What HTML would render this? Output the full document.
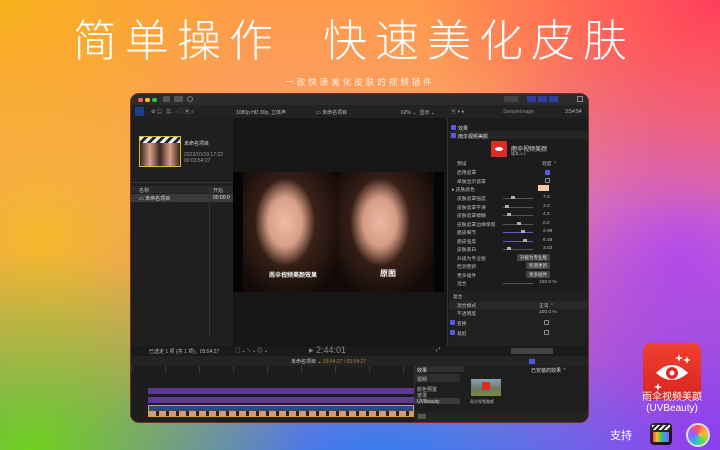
<!DOCTYPE html>
<html><head><meta charset="utf-8"><style>
*{margin:0;padding:0;box-sizing:border-box}
body{width:720px;height:450px;overflow:hidden;position:relative;font-family:"Liberation Sans","Noto Sans CJK SC",sans-serif;
background:
radial-gradient(ellipse 260px 200px at 0px 0px,#f8b21c 0%,rgba(248,178,28,0) 100%),
radial-gradient(ellipse 300px 220px at 720px 0px,#ff3d5e 0%,rgba(255,61,94,0) 100%),
radial-gradient(ellipse 280px 200px at 30px 450px,#6fd21c 0%,rgba(111,210,28,0) 100%),
radial-gradient(ellipse 300px 160px at 380px 470px,#2f7ef0 0%,rgba(47,126,240,0) 100%),
radial-gradient(ellipse 280px 260px at 720px 450px,#8b3ff0 0%,rgba(139,63,240,0) 100%),
radial-gradient(ellipse 260px 240px at 680px 260px,#c04de8 0%,rgba(192,77,232,0) 100%),
radial-gradient(ellipse 240px 200px at 40px 240px,#f6b82a 0%,rgba(246,184,42,0) 100%),
linear-gradient(180deg,#ff9a4a 0%,#f7a070 40%,#c780a0 80%,#8f6ad8 100%);}
.a{position:absolute}
.t{color:#fff;font-size:44px;letter-spacing:8px;top:17px;white-space:nowrap;font-weight:300;line-height:50px}
.sub{top:76px;left:0;width:720px;text-align:center;color:rgba(255,255,255,.85);font-size:8.5px;letter-spacing:3px}
.win{left:130px;top:93px;width:459px;height:330px;background:#1b1b1b;border-radius:9px;border:1.5px solid #7a2a28;overflow:hidden}
.s{font-size:5px;color:#bbb;white-space:nowrap}
.w{color:#ddd}
.row{position:absolute;left:10px;font-size:4.8px;color:#bbb;white-space:nowrap}
.sl{position:absolute;height:1px;background:#555}
.knob{position:absolute;width:4px;height:3px;background:#aab}
.btn{position:absolute;background:#444;border-radius:1px;font-size:4.5px;color:#ddd;text-align:center;line-height:7px;height:7px;white-space:nowrap}
.cb{position:absolute;width:5px;height:5px;border:1px solid #8a8aa0;border-radius:1px}
.cbb{position:absolute;width:5px;height:5px;background:#5a5ae0;border-radius:1px}
.clip{position:absolute;height:6px;background:#5b3a8f}
</style></head><body>
<div class="a t" style="left:73px">简单操作</div>
<div class="a t" style="left:323px">快速美化皮肤</div>
<div class="a sub">一款快速美化皮肤的视频插件</div>

<div class="a win">
 <div class="a" style="left:0;top:0;width:459px;height:11px;background:#2c2c2c"></div>
 <div class="a" style="left:7px;top:3.5px;width:4.5px;height:4.5px;border-radius:50%;background:#ff5f57"></div>
 <div class="a" style="left:14px;top:3.5px;width:4.5px;height:4.5px;border-radius:50%;background:#febc2e"></div>
 <div class="a" style="left:21px;top:3.5px;width:4.5px;height:4.5px;border-radius:50%;background:#28c840"></div>
 <div class="a" style="left:32px;top:2px;width:7px;height:6px;background:#555;border-radius:1px"></div>
 <div class="a" style="left:43px;top:2px;width:9px;height:6px;background:#555;border-radius:1px"></div>
 <div class="a" style="left:56px;top:2px;width:6px;height:6px;border:1px solid #777;border-radius:50%"></div>
 <div class="a" style="left:373px;top:2px;width:14px;height:6px;background:#444;border-radius:1px"></div>
 <div class="a" style="left:396px;top:2px;width:9px;height:6px;background:#2c3ea0"></div>
 <div class="a" style="left:407px;top:2px;width:9px;height:6px;background:#2c3ea0"></div>
 <div class="a" style="left:418px;top:2px;width:9px;height:6px;background:#2c3ea0"></div>
 <div class="a" style="left:446px;top:2px;width:6px;height:6px;border:1px solid #888"></div>
 <div class="a" style="left:0;top:11px;width:459px;height:13px;background:#222"></div>
 <div class="a" style="left:4px;top:13px;width:9px;height:9px;background:#1d3f8a"></div>
 <div class="a s" style="left:20px;top:14px;color:#aaa">⚙ ▤ &nbsp; ▦.. ⁝ ▢ ▣ ⌕</div>
 <div class="a s" style="left:105px;top:15px">1080p HD 30p, 立体声</div>
 <div class="a s" style="left:185px;top:15px">▭ 未命名项目</div>
 <div class="a s" style="left:270px;top:15px">62% ⌄ &nbsp;显示 ⌄</div>
 <div class="a s" style="left:320px;top:14px;color:#99a">▣ ▾ ●</div>
 <div class="a s" style="left:372px;top:15px;color:#888">SampleImage</div>
 <div class="a s" style="left:434px;top:15px">3:54:54</div>
 <div class="a" style="left:0;top:24px;width:102px;height:228px;background:#1f1f1f"></div>
 <div class="a" style="left:8px;top:42px;width:42px;height:31px;border:1px solid #d9b73a;background:linear-gradient(90deg,#3a2418 0%,#d8a088 25%,#3a2418 50%,#d8a088 75%,#3a2418 100%)"></div>
 <div class="a" style="left:9px;top:43px;width:40px;height:6px;background:repeating-linear-gradient(135deg,#eee 0 3px,#222 3px 6px)"></div>
 <div class="a s w" style="left:53px;top:46px">未命名项目</div>
 <div class="a s" style="left:53px;top:58px;color:#999">2022/10/19 17:22</div>
 <div class="a s" style="left:53px;top:64px;color:#999">00:03:54:27</div>
 <div class="a" style="left:0;top:88px;width:102px;height:1px;background:#333"></div>
 <div class="a" style="left:0;top:92px;width:102px;height:7px;background:#2a2a2a"></div>
 <div class="a s" style="left:8px;top:93px">名称</div><div class="a s" style="left:82px;top:93px">开始</div>
 <div class="a" style="left:0;top:100px;width:102px;height:8px;background:#3a3a3a"></div>
 <div class="a s w" style="left:8px;top:101px">▭ 未命名项目</div><div class="a s w" style="left:82px;top:101px">00:00:0</div>
 <div class="a" style="left:78px;top:92px;width:1px;height:150px;background:#333"></div>
 <div class="a" style="left:102px;top:24px;width:214px;height:228px;background:#161616"></div>
 <div class="a" style="left:102px;top:78px;width:211px;height:120px;background:#050505"></div>
 <div class="a" style="left:112px;top:78px;width:95px;height:120px;background:radial-gradient(ellipse 30px 44px at 42px 50px,#ecbba4 0%,#d9a088 55%,rgba(90,50,35,0) 100%),radial-gradient(ellipse 60px 80px at 45px 50px,#5a3425 0%,#2a1812 70%,#120a08 100%)"></div>
 <div class="a" style="left:207px;top:78px;width:96px;height:120px;background:radial-gradient(ellipse 30px 44px at 42px 50px,#eab8a3 0%,#d69c85 55%,rgba(90,50,35,0) 100%),radial-gradient(ellipse 60px 80px at 45px 50px,#5a3425 0%,#2a1812 70%,#120a08 100%)"></div>
 <div class="a" style="left:138px;top:176px;font-size:6px;color:#fff;font-weight:bold;white-space:nowrap">雨伞视频美颜效果</div>
 <div class="a" style="left:249px;top:174px;font-size:8px;color:#fff;font-weight:bold">原图</div>
 <div class="a" style="left:316px;top:24px;width:143px;height:228px;background:#1c1c1c;border-left:1px solid #333"></div>
 <div class="cbb" style="left:320px;top:31px"></div><div class="a s w" style="left:327px;top:31px">效果</div>
 <div class="a" style="left:318px;top:37px;width:138px;height:8px;background:#262626"></div>
 <div class="cbb" style="left:320px;top:39px"></div><div class="a s w" style="left:327px;top:39px">雨伞视频美颜</div>
 <div class="a" style="left:360px;top:47px;width:16px;height:16px;background:#e02a26;border-radius:1px"></div>
 <div class="a" style="left:364px;top:53px;width:8px;height:4px;background:#fff;border-radius:50%"></div>
 <div class="a s w" style="left:380px;top:50px;font-size:6px">雨伞视频美颜</div>
 <div class="a s" style="left:380px;top:57px;font-size:4px">版本:1.0</div>
 <div style="position:absolute;left:316px;top:0;width:143px;height:260px">
  <div class="row" style="top:66px">预设</div><div class="row" style="top:66px;left:95px">轻度 ⌃</div>
  <div class="row" style="top:75px">启用遮罩</div><div class="cbb" style="left:98px;top:76px"></div>
  <div class="row" style="top:84px">单独显示遮罩</div><div class="cb" style="left:98px;top:84px"></div>
  <div class="row" style="top:92px;left:5px">▸ 皮肤颜色</div><div class="a" style="left:91px;top:91px;width:11px;height:6px;background:#f3c9a8"></div>
  <div class="row" style="top:101px">皮肤遮罩强度</div>
  <div class="row" style="top:110px">皮肤遮罩平滑</div>
  <div class="row" style="top:118px">皮肤遮罩模糊</div>
  <div class="row" style="top:127px">皮肤遮罩边缘保留</div>
  <div class="row" style="top:135px">磨皮细节</div>
  <div class="row" style="top:144px">磨皮强度</div>
  <div class="row" style="top:152px">皮肤美白</div>
  <div class="row" style="top:161px">升级为专业版</div>
  <div class="row" style="top:169px">检测更新</div>
  <div class="row" style="top:178px">更多插件</div>
  <div class="row" style="top:186px">混合</div>
  <div class="sl" style="left:56px;top:104px;width:30px"></div><div class="knob" style="left:64px;top:102px"></div><div class="row" style="top:101px;left:96px">7.0</div>
  <div class="sl" style="left:56px;top:113px;width:30px"></div><div class="knob" style="left:58px;top:111px"></div><div class="row" style="top:110px;left:96px">3.0</div>
  <div class="sl" style="left:56px;top:121px;width:30px"></div><div class="knob" style="left:60px;top:119px"></div><div class="row" style="top:118px;left:96px">4.0</div>
  <div class="sl" style="left:56px;top:130px;width:30px"></div><div class="knob" style="left:70px;top:128px"></div><div class="row" style="top:127px;left:96px">0.2</div>
  <div class="sl" style="left:56px;top:138px;width:30px;background:#5a5ae0"></div><div class="knob" style="left:74px;top:136px"></div><div class="row" style="top:135px;left:96px">2.99</div>
  <div class="sl" style="left:56px;top:147px;width:30px;background:#5a5ae0"></div><div class="knob" style="left:76px;top:145px"></div><div class="row" style="top:144px;left:96px">6.48</div>
  <div class="sl" style="left:56px;top:155px;width:30px"></div><div class="knob" style="left:60px;top:153px"></div><div class="row" style="top:152px;left:96px">3.02</div>
  <div class="btn" style="left:70px;top:160px;width:33px">升级为专业版</div>
  <div class="btn" style="left:79px;top:168px;width:24px">检测更新</div>
  <div class="btn" style="left:79px;top:177px;width:24px">更多插件</div>
  <div class="sl" style="left:56px;top:189px;width:30px"></div><div class="row" style="top:186px;left:92px">100.0 %</div>
  <div class="a" style="left:2px;top:196px;width:138px;height:56px;background:#202020"></div>
  <div class="row" style="top:199px;left:6px">复合</div>
  <div class="a" style="left:2px;top:207px;width:138px;height:8px;background:#282828"></div>
  <div class="row" style="top:208px">混合模式</div><div class="row" style="top:208px;left:92px">正常 ⌃</div>
  <div class="row" style="top:216px">不透明度</div><div class="row" style="top:216px;left:92px">100.0 %</div>
  <div class="cbb" style="left:3px;top:226px"></div><div class="row" style="top:226px">变换</div><div class="cb" style="left:97px;top:226px"></div>
  <div class="cbb" style="left:3px;top:236px"></div><div class="row" style="top:236px">裁剪</div><div class="cb" style="left:97px;top:236px"></div>
 </div>
 <div class="a" style="left:0;top:252px;width:459px;height:10px;background:#1a1a1a"></div>
 <div class="a s" style="left:18px;top:254px">已选定 1 项 (共 1 项)，03:54:27</div>
 <div class="a s" style="left:104px;top:253px">▢ ⌄ ⟍ ⌄ ◎ ⌄</div>
 <div class="a" style="left:178px;top:251px;font-size:9px;color:#888;white-space:nowrap">▸ 2:44:01</div>
 <div class="a s" style="left:305px;top:253px">⤢</div>
 <div class="a" style="left:380px;top:254px;width:42px;height:6px;background:#444;border-radius:1px"></div>
 <div class="a" style="left:0;top:262px;width:459px;height:10px;background:#242424"></div>
 <div class="a s" style="left:160px;top:264px;color:#ccc">未命名项目 ⌄ <span style="color:#a08a3a">03:54:27 / 03:54:27</span></div>
 <div class="a" style="left:398px;top:265px;width:6px;height:5px;background:#4a5ad8"></div>
 <div class="a" style="left:0;top:272px;width:283px;height:58px;background:#1d1d1d"></div>
 <div class="a" style="left:0;top:272px;width:283px;height:6px;background:repeating-linear-gradient(90deg,#444 0 1px,transparent 1px 34px);opacity:.8"></div>
 <div class="clip" style="left:17px;top:294px;width:266px"></div>
 <div class="clip" style="left:17px;top:303px;width:266px"></div>
 <div class="a" style="left:17px;top:311px;width:266px;height:12px;background:#2a4a78;border:1px solid #c9a83a"></div>
 <div class="a" style="left:18px;top:317px;width:264px;height:5px;background:repeating-linear-gradient(90deg,#d49a7e 0 7px,#2a1e1a 7px 10px)"></div>
 <div class="a" style="left:283px;top:272px;width:176px;height:58px;background:#1e1e1e;border-left:1px solid #333"></div>
 <div class="a" style="left:283px;top:272px;width:50px;height:6px;background:#2e2e2e"></div>
 <div class="a s w" style="left:286px;top:273px">效果</div>
 <div class="a" style="left:284px;top:280px;width:45px;height:8px;background:#2e2e2e"></div>
 <div class="a s" style="left:286px;top:282px">视频</div>
 <div class="a s" style="left:286px;top:292px">颜色预置</div>
 <div class="a s" style="left:286px;top:298px">遮罩</div>
 <div class="a" style="left:284px;top:304px;width:45px;height:6px;background:#3a3a3a"></div>
 <div class="a s w" style="left:286px;top:305px">UVBeauty</div>
 <div class="a s w" style="left:400px;top:273px">已安装的效果 ⌃</div>
 <div class="a" style="left:340px;top:285px;width:30px;height:17px;background:linear-gradient(180deg,#8aa2b8 0%,#6a7a6a 55%,#7a8a3a 100%)"></div>
 <div class="a" style="left:351px;top:288px;width:8px;height:8px;background:#e02a26"></div>
 <div class="a s" style="left:339px;top:305px;font-size:4px">雨伞视频美颜</div>
 <div class="a" style="left:283px;top:318px;width:176px;height:12px;background:#242424"></div>
 <div class="a" style="left:287px;top:320px;width:8px;height:5px;background:#555"></div>
</div>

<div class="a" style="left:643px;top:343px;width:58px;height:57px;border-radius:8px;background:linear-gradient(180deg,#f04030,#d8241f)"></div>
<svg class="a" style="left:643px;top:343px" width="58" height="57" viewBox="0 0 58 57">
 <path d="M13 30 Q29 14 45 30 Q29 44 13 30Z" fill="#fff"/>
 <circle cx="29" cy="30" r="6" fill="#e02a26"/><circle cx="29" cy="30" r="2.5" fill="#fff"/>
 <path d="M36 11 l1 3 3 1-3 1-1 3-1-3-3-1 3-1z M44 13 l1 3 3 1-3 1-1 3-1-3-3-1 3-1z M15 40 l1 3 3 1-3 1-1 3-1-3-3-1 3-1z" fill="#fff"/>
</svg>
<div class="a" style="left:630px;top:392px;width:84px;text-align:center;color:#fff;font-size:10px;line-height:11px">雨伞视频美颜<br>(UVBeauty)</div>
<div class="a" style="left:610px;top:427px;color:#fff;font-size:11px">支持</div>
<div class="a" style="left:650px;top:423px;width:22px;height:22px;border-radius:4px;background:linear-gradient(135deg,#333,#111)"></div>
<div class="a" style="left:652px;top:425px;width:18px;height:5px;background:repeating-linear-gradient(135deg,#fff 0 2px,#222 2px 4px)"></div>
<div class="a" style="left:653px;top:432px;width:16px;height:10px;background:linear-gradient(90deg,#f44,#fb3,#4c4,#39f,#a4f)"></div>
<div class="a" style="left:686px;top:423px;width:24px;height:24px;border-radius:50%;background:conic-gradient(#f55,#fb3,#5d5,#3af,#a5f,#f55);border:2px solid #ddd"></div>
</body></html>
